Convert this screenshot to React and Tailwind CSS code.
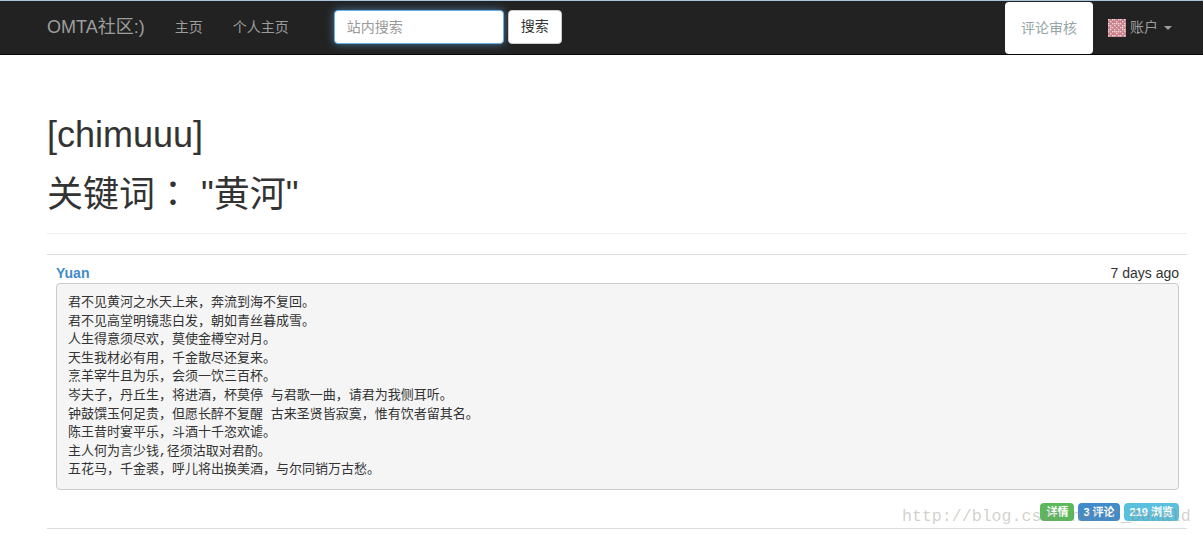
const poem = [
  "君不见黄河之水天上来，奔流到海不复回。",
  "君不见高堂明镜悲白发，朝如青丝暮成雪。",
  "人生得意须尽欢，莫使金樽空对月。",
  "天生我材必有用，千金散尽还复来。",
  "烹羊宰牛且为乐，会须一饮三百杯。",
  "岑夫子，丹丘生，将进酒，杯莫停 与君歌一曲，请君为我侧耳听。",
  "钟鼓馔玉何足贵，但愿长醉不复醒 古来圣贤皆寂寞，惟有饮者留其名。",
  "陈王昔时宴平乐，斗酒十千恣欢谑。",
  "主人何为言少钱,径须沽取对君酌。",
  "五花马，千金裘，呼儿将出换美酒，与尔同销万古愁。",
];

// small symmetric identicon, same look as the gravatar in the reference
const cells = [
  "101101101",
  "010010010",
  "101111101",
  "110101011",
  "011010110",
];

const Avatar = () => (
  <svg width="18" height="18" viewBox="0 0 18 18" className="mr-1">
    <rect width="18" height="18" fill="#c9808c" />
    {[...cells, ...cells.slice(0, 4).reverse()].map((row, y) =>
      row.split("").map((c, x) =>
        c === "1" ? (
          <rect key={`${x}-${y}`} x={x * 2} y={y * 2} width="1.4" height="1.4" fill="#f0d5da" />
        ) : null
      )
    )}
  </svg>
);

const App = () => {
  return (
    <div className="relative h-[535px] overflow-hidden bg-white text-[14px] text-[#333] font-['Liberation_Sans','Noto_Sans_CJK_SC',sans-serif]">
      <nav className="flex h-[55px] items-stretch border-y border-t-[#a9c4dc] border-b-[#080808] bg-[#222] pl-[47px] pr-[16px]">
        <a className="flex items-center text-[18px] text-[#9d9d9d]">OMTA社区:)</a>
        <a className="ml-[30px] flex items-center text-[#9d9d9d]">主页</a>
        <a className="ml-[30px] flex items-center text-[#9d9d9d]">个人主页</a>
        <div className="ml-[45px] mb-[2px] flex items-center gap-1">
          <input
            placeholder="站内搜索"
            className="h-[34px] w-[170px] rounded border border-[#66afe9] bg-white px-3 text-[14px] shadow-[0_0_8px_rgba(102,175,233,0.6)] outline-none placeholder:text-[#999]"
          />
          <button className="h-[34px] w-[54px] rounded border border-[#ccc] bg-white text-[14px] text-[#333]">
            搜索
          </button>
        </div>
        <div className="ml-auto flex items-stretch">
          <a className="mt-px flex w-[88px] items-center justify-center rounded bg-white text-[#95a5a6]">
            评论审核
          </a>
          <a className="flex items-center px-[15px] text-[#9d9d9d]">
            <Avatar />
            账户
            <span className="ml-[6px] h-0 w-0 border-x-4 border-t-4 border-x-transparent border-t-[#9d9d9d]"></span>
          </a>
        </div>
      </nav>

      <main className="pl-[47px] pr-4">
        <h1 className="mt-[60px] text-[36px] leading-[40px]">[chimuuu]</h1>
        <h1 className="mt-[20px] text-[36px] leading-[40px]">
          关键词<span className="font-['Noto_Sans_CJK_TC'] leading-[0]">：</span> "黄河"
        </h1>
        <hr className="mt-[18px] border-[#eee]" />

        <section className="mt-5 border-y border-y-[#ddd] pl-[9px] pr-2 pb-[7px]">
          <div className="-mb-px flex h-[29px] items-end justify-between">
            <a className="text-[14px] font-bold text-[#428bca]">Yuan</a>
            <span className="text-[14px] text-[#333]">7 days ago</span>
          </div>
          <pre className="h-[207px] rounded border border-[#ccc] bg-[#f5f5f5] px-[11px] pt-[10px] text-[13px] leading-[18.6px] text-[#333] font-['Liberation_Mono','Noto_Sans_CJK_SC',monospace]">
            {poem.join("\n")}
          </pre>
          <div className="mt-[13px] flex justify-end gap-1">
            <span className="flex h-[18px] items-center rounded bg-[#5cb85c] px-[6px] text-[11px] font-bold text-white">详情</span>
            <span className="flex h-[18px] items-center rounded bg-[#428bca] px-[5px] text-[11px] font-bold text-white">3 评论</span>
            <span className="flex h-[18px] items-center rounded bg-[#5bc0de] px-[6px] text-[11px] font-bold text-white">219 浏览</span>
          </div>
        </section>
      </main>

      <span className="absolute left-[902px] top-[505px] text-[16.6px] text-[#8a8a7a]/40 font-['Liberation_Mono',monospace]">
        http://blog.csdn.net/C_Donald
      </span>
    </div>
  );
};

export default App;
